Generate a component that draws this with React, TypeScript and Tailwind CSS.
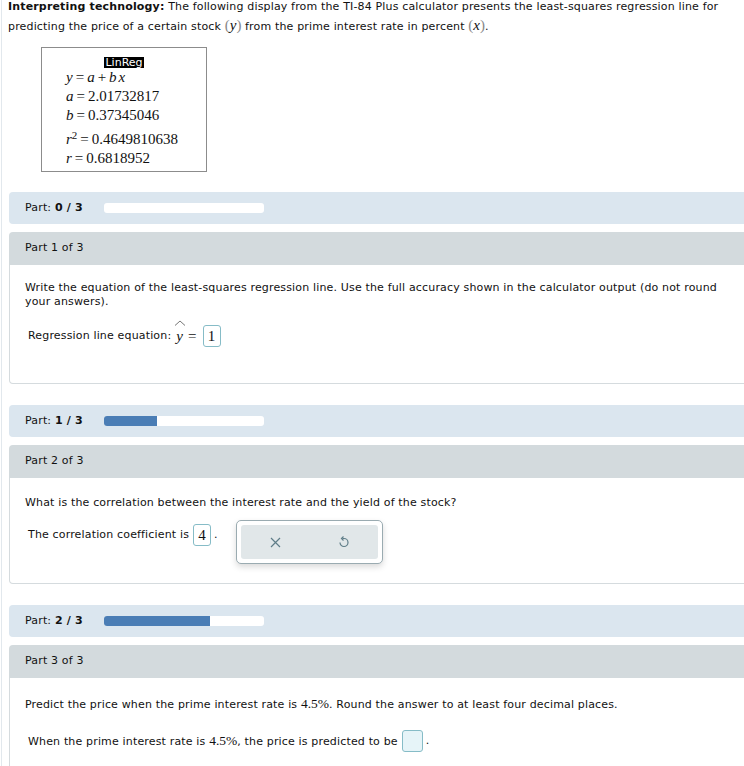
import React from "react";

const serif = "font-['Liberation_Serif','Times_New_Roman',serif]";

function PartBar({ n, fill }: { n: number; fill: string }) {
  return (
    <div className="ml-[7px] -mr-4 flex h-[32px] items-center rounded-[4px] bg-[#dbe6ef] pl-4">
      <div className="w-[79px]">
        Part: <span className="font-bold">{n} / 3</span>
      </div>
      <div className="h-[10px] w-[160px] overflow-hidden rounded-[3px] bg-white">
        <div className={`h-full bg-[#4a7db5] ${fill}`} />
      </div>
    </div>
  );
}

function Card({
  title,
  bodyClass,
  children,
}: {
  title: string;
  bodyClass: string;
  children: React.ReactNode;
}) {
  return (
    <div className="ml-[7px] -mr-4 mt-2">
      <div className="flex h-[33px] items-center rounded-t-[4px] bg-[#d3dadd] pl-4">{title}</div>
      <div className={`relative rounded-b-[4px] border border-t-0 border-[#d5dbde] bg-white pl-[15px] ${bodyClass}`}>
        {children}
      </div>
    </div>
  );
}

function AnswerBox({ value }: { value?: string }) {
  return (
    <span
      className={`inline-flex h-[22px] items-center justify-center rounded-[3px] border border-[#86bcc7] text-[15px] tracking-normal ${serif} ${
        value ? "w-[18px] bg-white" : "w-[21px] bg-[#e6f4f8]"
      }`}
    >
      {value}
    </span>
  );
}

function Pct() {
  return <span className={`text-[13.5px] tracking-normal ${serif}`}>4.5%</span>;
}

export default function App() {
  return (
    <div className="ml-px h-screen overflow-hidden border-l border-[#e2e8ed] text-[11px] tracking-[0.16px] text-[#111] font-['DejaVu_Sans',Verdana,sans-serif]">
      {/* question prompt */}
      <div className="-mt-[2px] pl-[6px] pr-2 leading-[18px]">
        <span className="font-bold">Interpreting technology:</span> The following display from the TI-84 Plus
        calculator presents the least-squares regression line for predicting the price of a certain stock{" "}
        <span className={`text-[15px] tracking-normal ${serif}`}>
          <span className="text-[#888]">(</span>
          <span className="italic">y</span>
          <span className="text-[#888]">)</span>
        </span>{" "}
        from the prime interest rate in percent{" "}
        <span className={`text-[15px] tracking-normal ${serif}`}>
          <span className="text-[#888]">(</span>
          <span className="italic">x</span>
          <span className="text-[#888]">)</span>
        </span>
        .
      </div>

      {/* calculator output */}
      <div className="ml-[39px] mt-[11px] w-[166px] border border-[#8c8c8c] pb-[3px] pt-[9px] tracking-normal">
        <div className="flex h-[11px] justify-center">
          <span className="bg-black px-[1px] text-[11px] leading-[12px] text-white">LinReg</span>
        </div>
        <div className={`pl-[24px] text-[15px] leading-[19px] ${serif}`}>
          <div>
            <span className="italic">y</span>
            <span className="mx-[3px]">=</span>
            <span className="italic">a</span>
            <span className="mx-[3px]">+</span>
            <span className="italic">b</span>
            <span className="ml-[2px] italic">x</span>
          </div>
          <div>
            <span className="italic">a</span>
            <span className="mx-[3px]">=</span>2.01732817
          </div>
          <div>
            <span className="italic">b</span>
            <span className="mx-[3px]">=</span>0.37345046
          </div>
          <div className="flex h-[24px] items-end">
            <span className="italic">r</span>
            <span className="relative -top-[8px] text-[11px] leading-[11px]">2</span>
            <span className="mx-[3px]">=</span>0.4649810638
          </div>
          <div>
            <span className="italic">r</span>
            <span className="mx-[3px]">=</span>0.6818952
          </div>
        </div>
      </div>

      <div className="mt-[20px]">
        <PartBar n={0} fill="w-0" />
      </div>

      <Card title="Part 1 of 3" bodyClass="h-[119px] pt-[16px]">
        <div className="pr-6 leading-[14px]">
          Write the equation of the least-squares regression line. Use the full accuracy shown in the calculator
          output (do not round your answers).
        </div>
        <div className="ml-[3px] mt-[16px] flex h-[22px] items-center">
          <span>Regression line equation:</span>
          <span className={`relative ml-[5px] text-[15px] italic tracking-normal ${serif}`}>
            y
            <svg
              className="absolute -top-[5px] -left-[2px]"
              width="12"
              height="6"
              viewBox="0 0 12 6"
              fill="none"
              stroke="#777"
              strokeWidth="1"
            >
              <path d="M1 5.5 L6 1 L11 5.5" />
            </svg>
          </span>
          <span className={`ml-[5px] mr-[6px] text-[15px] ${serif}`}>=</span>
          <AnswerBox value="1" />
        </div>
      </Card>

      <div className="mt-[21px]">
        <PartBar n={1} fill="w-[53px]" />
      </div>

      <Card title="Part 2 of 3" bodyClass="h-[106px] pt-[18px]">
        <div className="leading-[14px]">What is the correlation between the interest rate and the yield of the stock?</div>
        <div className="ml-[3px] mt-[14px] flex h-[22px] items-center">
          <span className="mr-[4px]">The correlation coefficient is</span>
          <AnswerBox value="4" />
          <span className="ml-[3px]">.</span>
        </div>
        <div className="absolute left-[226px] top-[42px] h-[44px] w-[147px] rounded-[5px] border border-[#9aabb1] bg-white p-[4px] shadow-[0_3px_6px_rgba(0,0,0,0.15)]">
          <div className="flex h-full items-center justify-around rounded-[3px] bg-[#e1e7e9]">
            <svg width="11" height="11" viewBox="0 0 11 11" stroke="#5f7d88" strokeWidth="1.2" fill="none">
              <path d="M1 1 L10 10 M10 1 L1 10" />
            </svg>
            <svg width="11" height="12" viewBox="0 0 11 12" stroke="#5f7d88" strokeWidth="1.2" fill="none">
              <path d="M4.5 2.5 H6 A4 4 0 1 1 2 6.5" />
              <path d="M5.5 0.5 L3.5 2.5 L5.5 4.5" />
            </svg>
          </div>
        </div>
      </Card>

      <div className="mt-[21px]">
        <PartBar n={2} fill="w-[106px]" />
      </div>

      <Card title="Part 3 of 3" bodyClass="h-[120px] pt-[19px]">
        <div className="leading-[14px]">
          Predict the price when the prime interest rate is <Pct />. Round the answer to at least four decimal
          places.
        </div>
        <div className="ml-[3px] mt-[18px] flex h-[22px] items-center">
          <span className="mr-[4px]">
            When the prime interest rate is <Pct />, the price is predicted to be
          </span>
          <AnswerBox />
          <span className="ml-[3px]">.</span>
        </div>
      </Card>
    </div>
  );
}
